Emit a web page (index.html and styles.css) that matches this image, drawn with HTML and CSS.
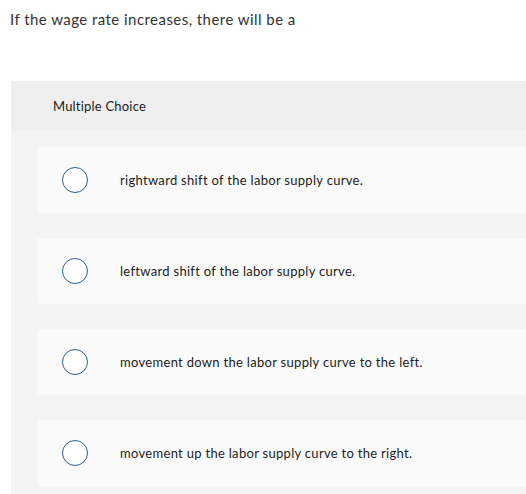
FILE: index.html
```html
<!DOCTYPE html>
<html>
<head>
<meta charset="utf-8">
<link rel="stylesheet" href="styles.css">
</head>
<body>
<div class="question">If the wage rate increases, there will be a</div>
<div class="panel">
  <div class="panel-head">Multiple Choice</div>
  <div class="options">
    <div class="option"><span class="radio"></span><span class="label">rightward shift of the labor supply curve.</span></div>
    <div class="option"><span class="radio"></span><span class="label">leftward shift of the labor supply curve.</span></div>
    <div class="option"><span class="radio"></span><span class="label">movement down the labor supply curve to the left.</span></div>
    <div class="option"><span class="radio"></span><span class="label">movement up the labor supply curve to the right.</span></div>
  </div>
</div>
</body>
</html>
```
FILE: styles.css
```css
html, body {
  margin: 0;
  padding: 0;
  background: #ffffff;
}
body {
  font-family: Lato, "Open Sans", sans-serif;
  color: #222;
  width: 526px;
  height: 494px;
  overflow: hidden;
}
.question {
  font-size: 15px;
  line-height: 20px;
  letter-spacing: 0.45px;
  padding: 9px 0 0 10px;
  height: 52px;
  box-sizing: border-box;
  color: #333;
}
.panel {
  margin: 29px 0 0 11px;
  background: #f4f4f4;
  height: 413px;
}
.panel-head {
  background: #efefef;
  height: 50px;
  display: flex;
  align-items: center;
  padding-left: 42px;
  font-size: 13px;
  letter-spacing: 0.2px;
  color: #222;
}
.options {
  display: flex;
  flex-direction: column;
  gap: 25px;
  padding: 16px 0 0 26px;
}
.option {
  height: 66px;
  background: #fafafa;
  border-radius: 3px 0 0 3px;
  display: flex;
  align-items: center;
  padding-left: 25px;
}
.radio {
  width: 24px;
  height: 24px;
  border: 1.5px solid #2c5d92;
  border-radius: 50%;
  background: #fff;
  flex: none;
}
.label {
  margin-left: 32px;
  font-size: 13px;
  letter-spacing: 0.3px;
  color: #222;
}
```
